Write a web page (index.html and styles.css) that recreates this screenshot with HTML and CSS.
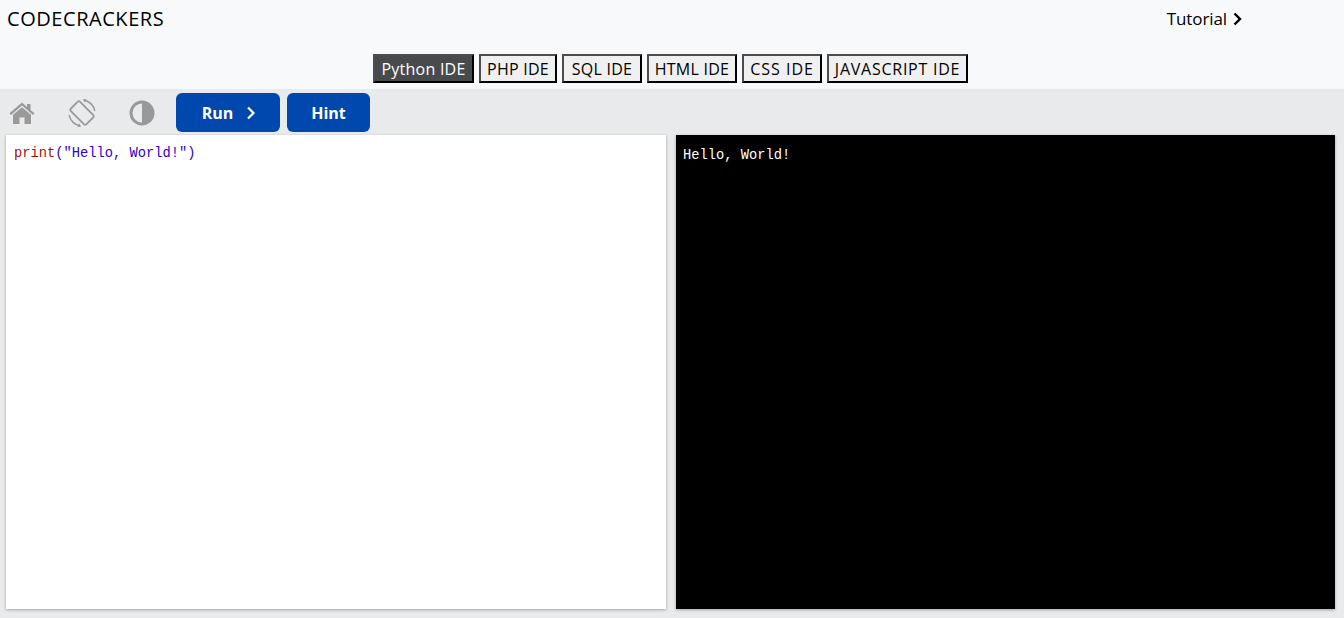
FILE: index.html
```html
<!DOCTYPE html>
<html lang="en">
<head>
<meta charset="utf-8">
<title>Codecrackers</title>
<link rel="stylesheet" href="styles.css">
</head>
<body>
<header class="header">
  <div class="top">
    <a class="brand">CODECRACKERS</a>
    <a class="tutorial">Tutorial
      <svg class="chev" width="9" height="14" viewBox="0 0 9 14"><path d="M1.5 1.5 7 7l-5.500 5.500" fill="none" stroke="#000" stroke-width="2.400"/></svg>
    </a>
  </div>
  <nav class="tabs">
    <button class="tab active">Python IDE</button>
    <button class="tab">PHP IDE</button>
    <button class="tab">SQL IDE</button>
    <button class="tab">HTML IDE</button>
    <button class="tab tab-css">CSS IDE</button>
    <button class="tab tab-js">JAVASCRIPT IDE</button>
  </nav>
</header>
<main class="main">
  <div class="toolbar">
    <span class="icon home">
      <svg width="26" height="22" viewBox="0 0 26 22"><path fill="#999" d="M13 0.500 0.500 11.300l1.500 1.700L13 3.600 24 13l1.500-1.700-4-3.400V2h-3.500v2.900L13 0.500zM13 5.200 4 12.800V22h6.500v-6.500h5V22H22v-9.200L13 5.200z"/></svg>
    </span>
    <span class="icon rotate">
      <svg width="28" height="30" viewBox="0 0 28 30" fill="none" stroke="#999"><rect x="7.500" y="4" width="13" height="22" rx="1.500" stroke-width="1.800" transform="rotate(-45 14 15)"/><path stroke-width="1.500" d="M16 2.200A13 13 0 0 1 26.800 13M12 27.800A13 13 0 0 1 1.200 17"/><path fill="#999" stroke="none" d="M15 1l4 .5-2.500 3zM13 29l-4-.5 2.500-3z"/></svg>
    </span>
    <span class="icon contrast">
      <svg width="26" height="26" viewBox="0 0 26 26"><circle cx="13" cy="13" r="11" fill="#e9eaec" stroke="#999" stroke-width="3"/><path fill="#999" d="M13 2a11 11 0 0 1 0 22z"/></svg>
    </span>
    <button class="action run">Run
      <svg class="run-chev" width="10" height="14" viewBox="0 0 10 14"><path d="M2 1.500 7.500 7 2 12.500" fill="none" stroke="#fff" stroke-width="2.200"/></svg>
    </button>
    <button class="action hint">Hint</button>
  </div>
  <div class="panes">
    <div class="pane editor"><span class="kw">print</span><span class="pn">(</span><span class="str">"Hello, World!"</span><span class="pn">)</span></div>
    <div class="pane output">Hello, World!</div>
  </div>
</main>
</body>
</html>
```
FILE: styles.css
```css
html, body {
  margin: 0;
  height: 100%;
}
body {
  width: 1344px;
  height: 618px;
  overflow: hidden;
  display: flex;
  flex-direction: column;
  font-family: "Open Sans", "Noto Sans", sans-serif;
  background: #e9eaec;
  color: #000;
}
.header {
  height: 89px;
  flex: none;
  background: #f8f9fa;
  display: flex;
  flex-direction: column;
}
.top {
  height: 54px;
  display: flex;
  justify-content: space-between;
  align-items: flex-start;
}
.brand {
  margin: 5px 0 0 7px;
  font-size: 20px;
  line-height: 27px;
  letter-spacing: 0.550px;
}
.tutorial {
  margin: 6px 102px 0 0;
  font-size: 17px;
  line-height: 25px;
  letter-spacing: -0.1px;
  display: flex;
  align-items: center;
  gap: 6px;
}
.tabs {
  display: grid;
  grid-template-columns: 101px 78px 80px 90px 80px 141px;
  column-gap: 5px;
  justify-content: center;
  padding-right: 3px;
}
.tab {
  height: 29px;
  padding: 0;
  font-family: "Open Sans", "Noto Sans", sans-serif;
  font-size: 16px;
  line-height: 20px;
  letter-spacing: 0.250px;
  color: #000;
  background: #f0f0f0;
  border: 2px solid;
  border-color: #4d4d4d #000 #000 #4d4d4d;
  border-radius: 0;
}
.tab-css {
  letter-spacing: 1px;
}
.tab-js {
  letter-spacing: 0.750px;
}
.tab.active {
  background: #484b4d;
  color: #fff;
}
.main {
  flex: 1;
  display: flex;
  flex-direction: column;
}
.toolbar {
  height: 46px;
  flex: none;
  display: flex;
  align-items: flex-start;
  padding-top: 4px;
  box-sizing: border-box;
}
.icon {
  display: flex;
  justify-content: center;
  align-items: center;
  height: 39px;
}
.home {
  width: 26px;
  margin-left: 9px;
}
.rotate {
  width: 28px;
  margin-left: 33px;
}
.contrast {
  width: 26px;
  margin-left: 33px;
}
.action {
  height: 39px;
  border: 0;
  border-radius: 6px;
  background: #0048ad;
  color: #fff;
  font-family: "Open Sans", "Noto Sans", sans-serif;
  font-size: 16px;
  font-weight: 700;
  display: flex;
  align-items: center;
  justify-content: center;
}
.run {
  width: 104px;
  margin-left: 21px;
  padding: 0 0 0 2px;
  gap: 13px;
}
.hint {
  width: 83px;
  margin-left: 7px;
}
.panes {
  display: flex;
  gap: 10px;
  padding-left: 6px;
}
.pane {
  height: 474px;
  box-shadow: 0 1px 3px rgba(0, 0, 0, 0.3);
  box-sizing: border-box;
  font-family: "Liberation Mono", monospace;
  font-size: 13.750px;
  white-space: pre;
}
.editor {
  width: 660px;
  background: #fff;
  padding: 10px 8px;
  line-height: 17px;
}
.output {
  width: 659px;
  background: #000;
  color: #fff;
  padding: 12px 7px;
  line-height: 17px;
}
.kw {
  color: #a11;
}
.pn {
  color: #30a;
}
.str {
  color: #30c;
}
```
